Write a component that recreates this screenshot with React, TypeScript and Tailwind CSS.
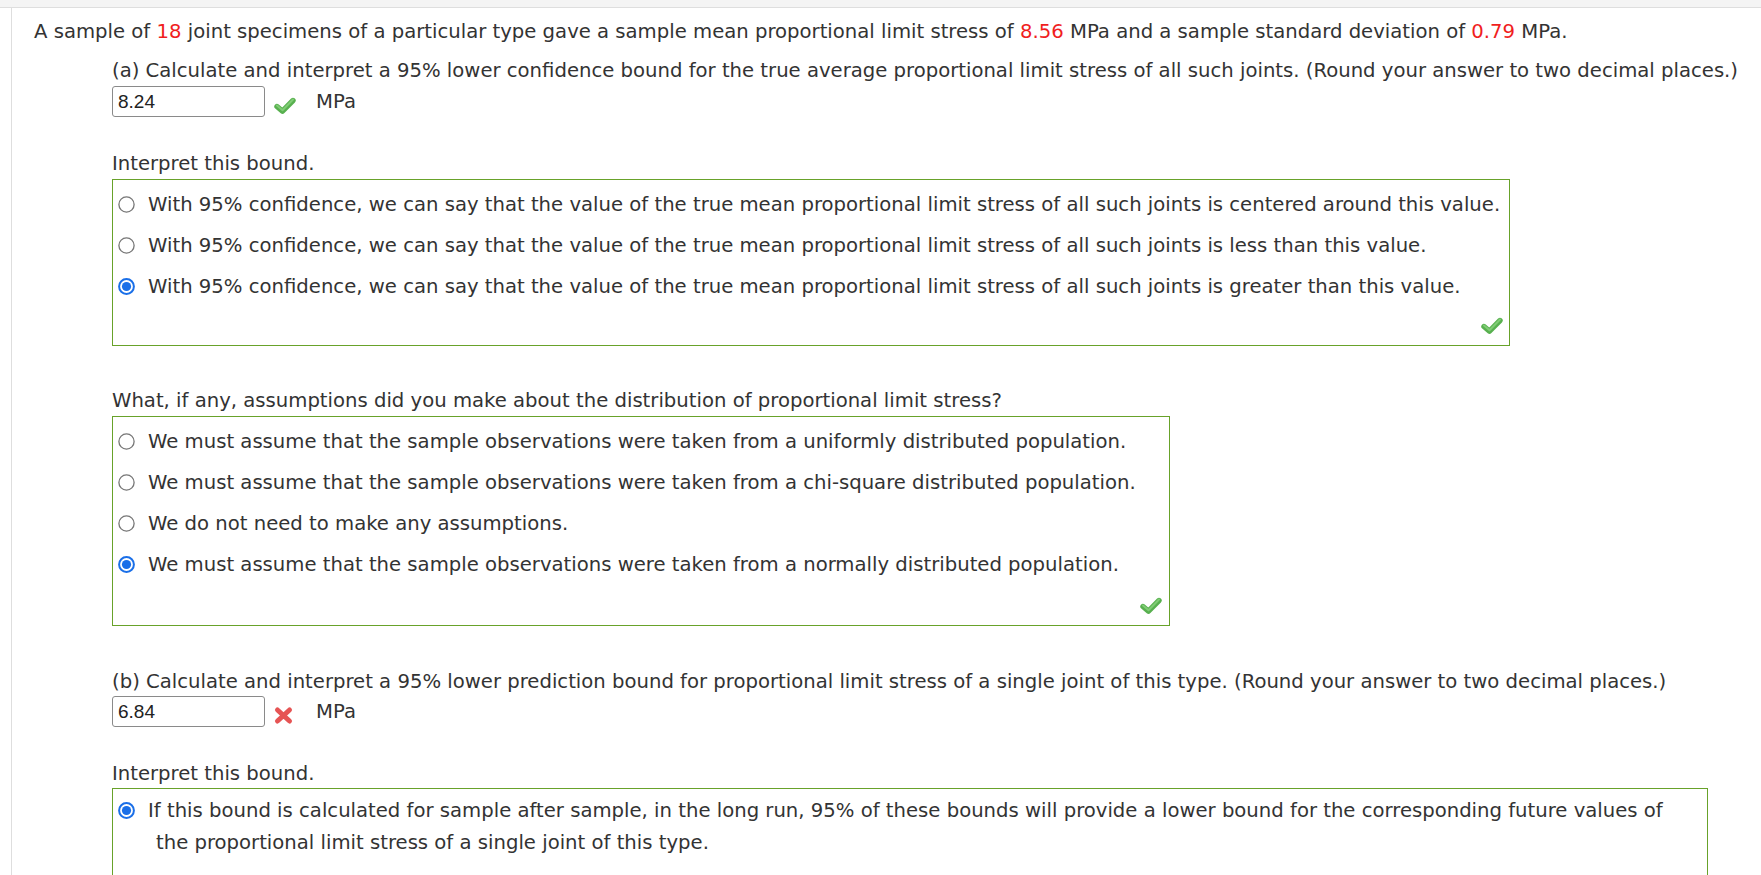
import React from "react";

const Radio = ({ checked }: { checked?: boolean }) =>
  checked ? (
    <svg width="17" height="17" viewBox="0 0 17 17" className="shrink-0">
      <circle cx="8.5" cy="8.5" r="7.4" fill="white" stroke="#1a6fe8" strokeWidth="2" />
      <circle cx="8.5" cy="8.5" r="4.6" fill="#1a6fe8" />
    </svg>
  ) : (
    <svg width="17" height="17" viewBox="0 0 17 17" className="shrink-0">
      <circle cx="8.5" cy="8.5" r="7.6" fill="white" stroke="#767676" strokeWidth="1.3" />
    </svg>
  );

const Check = () => (
  <svg width="24" height="19" viewBox="0 0 24 19">
    <path d="M4 10.5 L9.5 15.2 L20 4.5" fill="none" stroke="#58b04f" strokeWidth="5.4" strokeLinecap="round" strokeLinejoin="round" />
    <path d="M4 10.5 L9.5 15.2 L20 4.5" fill="none" stroke="#7fcc74" strokeWidth="2" strokeLinecap="round" strokeLinejoin="round" transform="translate(0,-1)" />
  </svg>
);

const Cross = () => (
  <svg width="21" height="19" viewBox="0 0 21 19">
    <path d="M4.5 4 L16.5 15 M16.5 4 L4.5 15" fill="none" stroke="#e65454" strokeWidth="5" strokeLinecap="round" />
  </svg>
);

const R = ({ children }: { children: React.ReactNode }) => (
  <span className="text-[#f01e1e]">{children}</span>
);

const Row = ({ checked, children }: { checked?: boolean; children: React.ReactNode }) => (
  <div className="flex items-center h-[41px] pl-[5px]">
    <Radio checked={checked} />
    <span className="ml-[13px] whitespace-nowrap">{children}</span>
  </div>
);

const AnswerInput = ({ value, ok }: { value: string; ok: boolean }) => (
  <div className="flex items-center h-[31px]">
    <div className="w-[153px] h-[31px] border border-[#8a8a8a] rounded-[3px] flex items-center pl-[5px] text-[19px] text-[#222]" style={{ fontFamily: '"Liberation Sans", Arial, sans-serif' }}>
      {value}
    </div>
    <div className="w-[43px] ml-[8px] flex items-center pt-[7px]">{ok ? <Check /> : <Cross />}</div>
    <span>MPa</span>
  </div>
);

export default function App() {
  return (
    <div className="min-h-screen bg-white text-[#333] text-[19.65px] leading-[24px]" style={{ fontFamily: '"DejaVu Sans", Verdana, sans-serif' }}>
      <div className="h-[8px] bg-[#f4f4f4] border-b border-[#dedede]" />
      <div className="ml-[11px] border-l border-[#dedede] pl-[22px] pt-[12px] min-h-[867px]">
        <div className="whitespace-nowrap">
          A sample of <R>18</R> joint specimens of a particular type gave a sample mean proportional limit stress of <R>8.56</R> MPa and a sample standard deviation of <R>0.79</R> MPa.
        </div>
        <div className="pl-[78px]">
          <div className="mt-[15px] whitespace-nowrap">
            (a) Calculate and interpret a 95% lower confidence bound for the true average proportional limit stress of all such joints. (Round your answer to two decimal places.)
          </div>
          <div className="mt-[3px]">
            <AnswerInput value="8.24" ok />
          </div>
          <div className="mt-[35px]">Interpret this bound.</div>
          <div className="mt-[3px] w-[1398px] border border-[#68a22a] pt-[4px]">
            <Row>With 95% confidence, we can say that the value of the true mean proportional limit stress of all such joints is centered around this value.</Row>
            <Row>With 95% confidence, we can say that the value of the true mean proportional limit stress of all such joints is less than this value.</Row>
            <Row checked>With 95% confidence, we can say that the value of the true mean proportional limit stress of all such joints is greater than this value.</Row>
            <div className="h-[38px] flex items-end justify-end pr-[5px] pb-[10px]">
              <Check />
            </div>
          </div>
          <div className="mt-[43px]">What, if any, assumptions did you make about the distribution of proportional limit stress?</div>
          <div className="mt-[3px] w-[1058px] border border-[#68a22a] pt-[4px]">
            <Row>We must assume that the sample observations were taken from a uniformly distributed population.</Row>
            <Row>We must assume that the sample observations were taken from a chi-square distributed population.</Row>
            <Row>We do not need to make any assumptions.</Row>
            <Row checked>We must assume that the sample observations were taken from a normally distributed population.</Row>
            <div className="h-[40px] flex items-end justify-end pr-[6px] pb-[10px]">
              <Check />
            </div>
          </div>
          <div className="mt-[44px] whitespace-nowrap">
            (b) Calculate and interpret a 95% lower prediction bound for proportional limit stress of a single joint of this type. (Round your answer to two decimal places.)
          </div>
          <div className="mt-[2px]">
            <AnswerInput value="6.84" ok={false} />
          </div>
          <div className="mt-[35px]">Interpret this bound.</div>
          <div className="mt-[2px] w-[1596px] border border-[#68a22a] border-b-0 pt-[6px] h-[120px]">
            <div className="flex items-start pl-[5px]">
              <div className="mt-[7px]">
                <Radio checked />
              </div>
              <span className="ml-[21px] leading-[32px] whitespace-nowrap -indent-[8px]">
                If this bound is calculated for sample after sample, in the long run, 95% of these bounds will provide a lower bound for the corresponding future values of
                <br />
                the proportional limit stress of a single joint of this type.
              </span>
            </div>
          </div>
        </div>
      </div>
    </div>
  );
}
